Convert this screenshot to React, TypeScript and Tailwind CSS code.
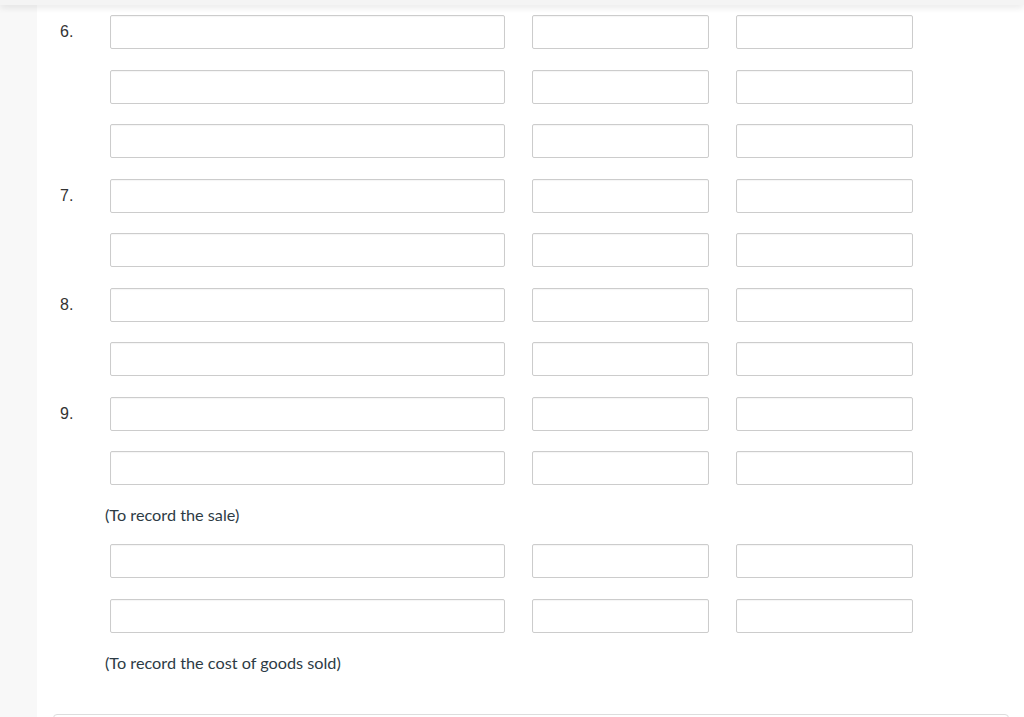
import React from "react";

type Row = { label?: string };

const Field = ({ w }: { w: string }) => (
  <input
    type="text"
    className={`${w} h-[34px] shrink-0 rounded-[2px] border border-[#cccccc] bg-white shadow-[inset_0_1px_1px_rgba(0,0,0,0.04)] outline-none`}
  />
);

const EntryRow = ({ label }: Row) => (
  <div className="flex h-[34px] shrink-0 items-center">
    <div
      className="w-[73px] shrink-0 pl-[23px] text-[16px] text-[#333333]"
      style={{ fontFamily: '"Liberation Sans", Arial, sans-serif' }}
    >
      {label ?? ""}
    </div>
    <div className="flex gap-[27px]">
      <Field w="w-[395px]" />
      <Field w="w-[177px]" />
      <Field w="w-[177px]" />
    </div>
  </div>
);

const Caption = ({ children }: { children: React.ReactNode }) => (
  <div
    className="flex h-[59px] shrink-0 items-center pl-[68px] pt-[1px] text-[16.25px] text-[#2d3b45]"
    style={{ fontFamily: "Lato, sans-serif" }}
  >
    {children}
  </div>
);

export default function App() {
  const rows: Row[] = [
    { label: "6." },
    {},
    {},
    { label: "7." },
    {},
    { label: "8." },
    {},
    { label: "9." },
    {},
  ];

  return (
    <div className="relative flex h-[717px] w-[1024px] overflow-hidden bg-white">
      {/* top toolbar edge */}
      <div className="absolute inset-x-0 top-0 z-10 h-[5px] bg-[#f4f4f4] shadow-[0_2px_7px_rgba(0,0,0,0.12)]" />

      {/* side gutter */}
      <div className="w-[37px] shrink-0 bg-[#f8f8f8]" />

      <div className="flex flex-1 flex-col pt-[15px]">
        <div className="flex shrink-0 flex-col gap-[20.5px]">
          {rows.map((r, i) => (
            <EntryRow key={i} label={r.label} />
          ))}
        </div>
        <Caption>(To record the sale)</Caption>
        <div className="flex shrink-0 flex-col gap-[21px]">
          <EntryRow />
          <EntryRow />
        </div>
        <Caption>(To record the cost of goods sold)</Caption>

        {/* next card begins below */}
        <div className="ml-[16px] mt-[22px] h-[20px] w-[956px] shrink-0 rounded-t-[4px] border border-[#dddddd] bg-white" />
      </div>
    </div>
  );
}
